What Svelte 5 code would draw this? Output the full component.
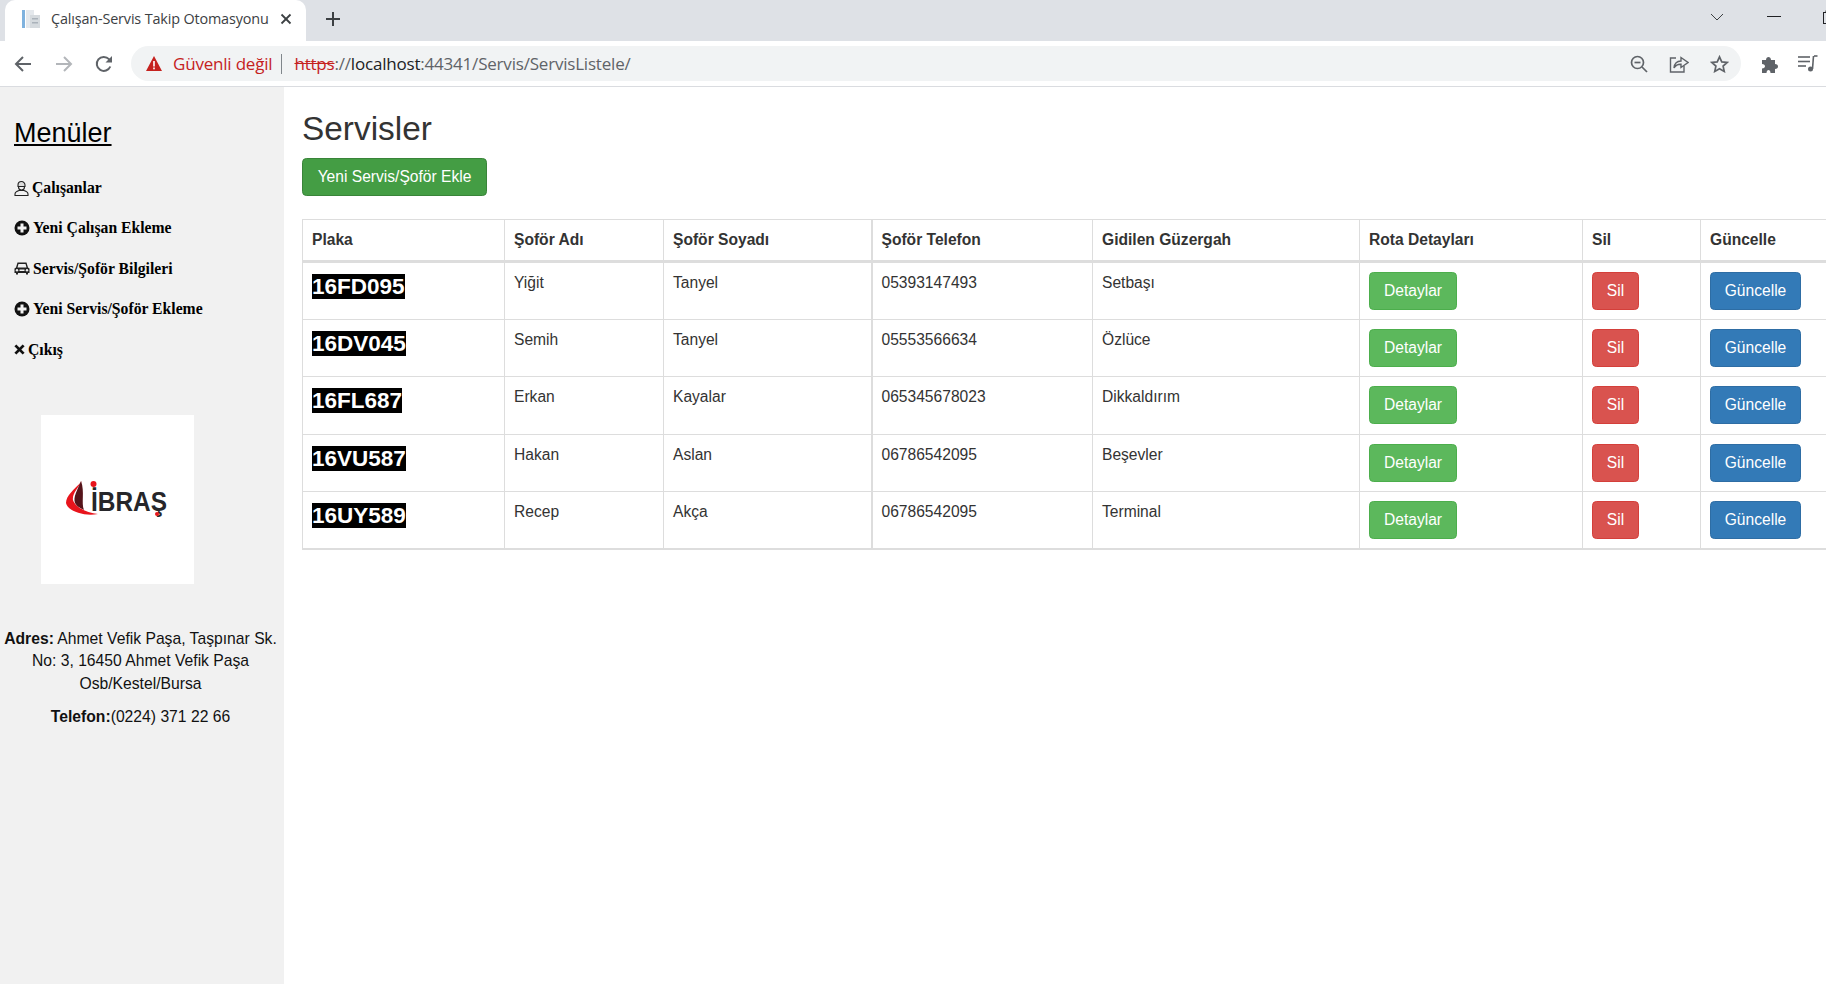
<script>
	const rows = [
		{ plaka: '16FD095', ad: 'Yiğit', soyad: 'Tanyel', tel: '05393147493', yol: 'Setbaşı' },
		{ plaka: '16DV045', ad: 'Semih', soyad: 'Tanyel', tel: '05553566634', yol: 'Özlüce' },
		{ plaka: '16FL687', ad: 'Erkan', soyad: 'Kayalar', tel: '065345678023', yol: 'Dikkaldırım' },
		{ plaka: '16VU587', ad: 'Hakan', soyad: 'Aslan', tel: '06786542095', yol: 'Beşevler' },
		{ plaka: '16UY589', ad: 'Recep', soyad: 'Akça', tel: '06786542095', yol: 'Terminal' }
	];
	const heads = ['Plaka', 'Şoför Adı', 'Şoför Soyadı', 'Şoför Telefon', 'Gidilen Güzergah', 'Rota Detayları', 'Sil', 'Güncelle'];
	const menu = [
		{ icon: 'user', label: 'Çalışanlar' },
		{ icon: 'plus', label: 'Yeni Çalışan Ekleme' },
		{ icon: 'car', label: 'Servis/Şoför Bilgileri' },
		{ icon: 'plus', label: 'Yeni Servis/Şoför Ekleme' },
		{ icon: 'x', label: 'Çıkış' }
	];
</script>

<div class="browser">
	<div class="tabstrip">
		<div class="tab">
			<svg class="favicon" viewBox="0 0 20 20" width="20" height="20">
				<rect x="1" y="1" width="3" height="18" fill="#7fb2de" />
				<rect x="5" y="1" width="8" height="18" fill="#e4e8ec" />
				<rect x="9" y="6" width="10" height="13" fill="#d5dade" />
				<rect x="11" y="9" width="6" height="1.5" fill="#aab2ba" />
				<rect x="11" y="13" width="6" height="1.5" fill="#aab2ba" />
			</svg>
			<span class="tab-title">Çalışan-Servis Takip Otomasyonu</span>
			<svg class="tab-close" viewBox="0 0 12 12" width="12" height="12" fill="none" stroke="#3c4043" stroke-width="1.8"><line x1="1.5" y1="1.5" x2="10.5" y2="10.5" /><line x1="10.5" y1="1.5" x2="1.5" y2="10.5" /></svg>
		</div>
		<svg class="new-tab" viewBox="0 0 16 16" width="16" height="16" fill="none" stroke="#3c4043" stroke-width="2"><line x1="8" y1="1" x2="8" y2="15" /><line x1="1" y1="8" x2="15" y2="8" /></svg>
		<div class="win-controls">
			<svg viewBox="0 0 14 8" width="14" height="8" fill="none" stroke="#3c4043" stroke-width="1"><polyline points="1,1 7,7 13,1" /></svg>
			<svg class="win-min" viewBox="0 0 14 2" width="14" height="2"><rect width="14" height="1" fill="#202124" /></svg>
			<svg class="win-max" viewBox="0 0 14 14" width="14" height="14" fill="none" stroke="#202124" stroke-width="1"><rect x="0.5" y="2.5" width="12" height="11" /><polyline points="3,2 3,0.5 13.5,0.5" /></svg>
		</div>
	</div>
	<div class="toolbar">
		<svg class="nav" viewBox="0 0 18 18" width="18" height="18" fill="none" stroke="#5f6368" stroke-width="2"><line x1="17" y1="9" x2="2" y2="9" /><polyline points="9,2 2,9 9,16" /></svg>
		<svg class="nav" viewBox="0 0 18 18" width="18" height="18" fill="none" stroke="#b3b6ba" stroke-width="2"><line x1="1" y1="9" x2="16" y2="9" /><polyline points="9,2 16,9 9,16" /></svg>
		<svg class="nav" viewBox="0 0 18 18" width="18" height="18" fill="none" stroke="#5f6368" stroke-width="2"><path d="M15.3 11.5A7 7 0 1 1 14 4.2L16 6" /><polygon points="17,1 17,7.5 10.5,7.5" fill="#5f6368" stroke="none" /></svg>
		<div class="omnibox">
			<svg class="warn" viewBox="0 0 16 15" width="16" height="15"><polygon points="8,0 16,15 0,15" fill="#c5221f" /><rect x="7.2" y="5" width="1.6" height="5.5" fill="#fff" /><rect x="7.2" y="11.5" width="1.6" height="1.8" fill="#fff" /></svg>
			<span class="insecure">Güvenli değil</span>
			<span class="sep"></span>
			<span class="url"><s class="https">https</s>://<span class="host">localhost</span>:44341/Servis/ServisListele/</span>
			<div class="omni-icons">
				<svg viewBox="0 0 18 18" width="18" height="18" fill="none" stroke="#5f6368" stroke-width="1.7"><circle cx="7.5" cy="7.5" r="6" /><line x1="12" y1="12" x2="17" y2="17" /><line x1="4.5" y1="7.5" x2="10.5" y2="7.5" /></svg>
				<svg viewBox="0 0 20 18" width="20" height="18" fill="none" stroke="#5f6368" stroke-width="1.4"><path d="M7 3H1.5V17H15V11" /><path d="M5 13C5.5 8.5 8.5 6 12 6V2.5L19 7.5L12 12.5V9.2C9 9 6.5 10.5 5 13Z" /></svg>
				<svg viewBox="0 0 20 19" width="19" height="18" fill="none" stroke="#5f6368" stroke-width="1.8"><polygon points="10,2 12.4,7.3 18,7.9 13.8,11.7 15,17.3 10,14.4 5,17.3 6.2,11.7 2,7.9 7.6,7.3" /></svg>
			</div>
		</div>
		<svg class="ext" viewBox="0 0 18 18" width="18" height="18"><path fill="#5f6368" d="M1 5H5C5 1 10 1 10 5H14V9C18 9 18 14 14 14V18H9.500C9.500 14 5.500 14 5.500 18H1V13.500C5 13.500 5 9 1 9Z" /></svg>
		<svg class="media" viewBox="0 0 20 17" width="20" height="17" fill="none" stroke="#5f6368" stroke-width="1.6"><line x1="0" y1="2" x2="12" y2="2" /><line x1="0" y1="6.500" x2="12" y2="6.500" /><line x1="0" y1="11" x2="8" y2="11" /><line x1="16" y1="1" x2="19.500" y2="1" /><line x1="15.500" y1="1" x2="14.500" y2="14" /><circle cx="12.500" cy="14" r="2.500" fill="#5f6368" stroke="none" /></svg>
	</div>
	<div class="page">
		<aside class="sidebar">
			<h2 class="side-title">Menüler</h2>
			<ul class="menu">
				{#each menu as item}
					<li>
						{#if item.icon === 'user'}
							<svg viewBox="0 0 15 16" width="15" height="16" fill="none" stroke="#222" stroke-width="1.100"><path d="M4 6.500V5A3.500 3.500 0 0 1 11 5V6.500H4Z" fill="#ddd" /><path d="M4.500 7A3 3 0 0 0 10.500 7" /><path d="M1 15.500V14C1 12 3.500 11 5 10.500H10C11.500 11 14 12 14 14V15.500Z" /></svg>
						{:else if item.icon === 'plus'}
							<svg viewBox="0 0 16 16" width="16" height="16"><circle cx="8" cy="8" r="7.500" fill="#111" /><rect x="6.500" y="3.500" width="3" height="9" fill="#f1f1f1" /><rect x="3.500" y="6.500" width="9" height="3" fill="#f1f1f1" /></svg>
						{:else if item.icon === 'car'}
							<svg viewBox="0 0 16 13" width="16" height="13"><path fill="#222" d="M3.500 0.500H12.500L14 5.500L15.500 6.500V11H14V12.500H12V11H4V12.500H2V11H0.500V6.500L2 5.500Z" /><path fill="#f1f1f1" d="M4.500 2H11.500L12.500 5.500H3.500Z" /><circle cx="3" cy="8.300" r="1.200" fill="#f1f1f1" /><circle cx="13" cy="8.300" r="1.200" fill="#f1f1f1" /><rect x="5.500" y="7.500" width="5" height="1.500" fill="#f1f1f1" /></svg>
						{:else}
							<svg viewBox="0 0 12 12" width="11" height="11" fill="none" stroke="#111" stroke-width="3"><line x1="1.500" y1="1.500" x2="10.500" y2="10.500" /><line x1="10.500" y1="1.500" x2="1.500" y2="10.500" /></svg>
						{/if}
						<span>{item.label}</span>
					</li>
				{/each}
			</ul>
			<div class="logo">
				<svg viewBox="0 0 153 169" width="153" height="169">
					<path d="M41 66C33 75 25 80 25 88C26 95 42 102 57 99C46 98 34 92 32 85C31 79 37 73 41 66Z" fill="#e8141c" />
					<path d="M40 66C36 76 32 82 34 88C36 92 40 93 43 95C40 88 44 77 40 66Z" fill="#55141a" />
					<text x="50" y="96" class="logo-text" textLength="76" lengthAdjust="spacingAndGlyphs">İBRAŞ</text>
					<circle cx="52.500" cy="69" r="3" fill="#e8141c" />
					<circle cx="116" cy="99" r="2" fill="#e8141c" />
				</svg>
			</div>
			<p class="address"><b>Adres:</b> Ahmet Vefik Paşa, Taşpınar Sk. No: 3, 16450 Ahmet Vefik Paşa Osb/Kestel/Bursa</p>
			<p class="phone"><b>Telefon:</b>(0224) 371 22 66</p>
		</aside>
		<main class="content">
			<h2 class="title">Servisler</h2>
			<button class="btn add">Yeni Servis/Şoför Ekle</button>
			<table>
				<colgroup>
					<col style="width:202px" /><col style="width:159px" /><col style="width:208px" /><col style="width:221px" /><col style="width:267px" /><col style="width:223px" /><col style="width:118px" /><col style="width:140px" />
				</colgroup>
				<thead>
					<tr>
						{#each heads as head}
							<th>{head}</th>
						{/each}
					</tr>
				</thead>
				<tbody>
					{#each rows as row}
						<tr>
							<td><mark>{row.plaka}</mark></td>
							<td>{row.ad}</td>
							<td>{row.soyad}</td>
							<td class="tel">{row.tel}</td>
							<td>{row.yol}</td>
							<td><button class="btn success">Detaylar</button></td>
							<td><button class="btn danger">Sil</button></td>
							<td><button class="btn primary">Güncelle</button></td>
						</tr>
					{/each}
				</tbody>
			</table>
		</main>
	</div>
</div>

<style>
	:global(body) {
		margin: 0;
		overflow: hidden;
		background: #fff;
	}

	.browser {
		display: flex;
		flex-direction: column;
		width: 1826px;
		height: 984px;
		overflow: hidden;
		font-family: "Liberation Sans", Arial, sans-serif;
	}

	.tabstrip {
		display: flex;
		align-items: flex-end;
		height: 41px;
		background: #dee1e6;
		flex: none;
		padding-left: 5px;
	}

	.tab {
		display: flex;
		align-items: center;
		box-sizing: border-box;
		width: 301px;
		height: 41px;
		padding: 0 14px 4px 16px;
		background: #fff;
		border-radius: 10px 10px 0 0;
	}

	.favicon {
		margin-right: 10px;
		flex: none;
	}

	.tab-title {
		flex: 1;
		font-family: "Open Sans", sans-serif;
		font-size: 14.400px;
		letter-spacing: -0.15px;
		color: #3c4043;
		white-space: nowrap;
	}

	.new-tab {
		margin: 0 0 14px 19px;
	}

	.win-controls {
		display: flex;
		align-items: center;
		margin-left: auto;
		height: 38px;
		margin-bottom: 5px;
	}

	.win-min {
		margin-left: 43px;
	}

	.win-max {
		margin-left: 42px;
		margin-right: -11px;
	}

	.toolbar {
		display: flex;
		align-items: center;
		flex: none;
		box-sizing: border-box;
		height: 46px;
		padding: 0 8px 0 14px;
		background: #fff;
		border-bottom: 1px solid #dadce0;
	}

	.nav {
		margin-right: 23px;
		flex: none;
	}

	.nav:nth-child(3) {
		margin-right: 18px;
		margin-left: -1px;
	}

	.omnibox {
		display: flex;
		align-items: center;
		box-sizing: border-box;
		width: 1612px;
		height: 35px;
		padding: 0 12px 0 15px;
		background: #f1f3f4;
		border-radius: 18px;
		font-family: "Open Sans", sans-serif;
		font-size: 17px;
		letter-spacing: -0.2px;
		color: #5f6368;
	}

	.insecure {
		margin-left: 11px;
		color: #c5221f;
	}

	.sep {
		width: 1px;
		height: 20px;
		margin: 0 12px 0 9px;
		background: #80868b;
	}

	.https {
		color: #c5221f;
	}

	.host {
		color: #202124;
	}

	.omni-icons {
		display: flex;
		align-items: center;
		gap: 21px;
		margin-left: auto;
	}

	.ext {
		margin-left: 20px;
		flex: none;
	}

	.media {
		margin-left: 19px;
		flex: none;
	}

	.page {
		display: flex;
		flex: 1;
		min-height: 0;
	}

	.sidebar {
		flex: none;
		width: 284px;
		background: #f1f1f1;
		color: #000;
	}

	.side-title {
		margin: 31px 0 0 14px;
		font-size: 27px;
		line-height: 31px;
		font-weight: 400;
		text-decoration: underline;
	}

	.menu {
		list-style: none;
		margin: 18.500px 0 0 14px;
		padding: 0;
	}

	.menu li {
		display: flex;
		align-items: center;
		gap: 3px;
		height: 40.500px;
		font-family: "Liberation Serif", serif;
		font-size: 15.700px;
		font-weight: 700;
	}

	.menu svg {
		flex: none;
	}

	.logo {
		width: 153px;
		height: 169px;
		margin: 44.500px 0 0 41px;
		background: #fff;
	}

	.logo svg {
		display: block;
	}

	.logo-text {
		font-family: "Liberation Sans", sans-serif;
		font-size: 27px;
		font-weight: 700;
		fill: #26262a;
	}

	.address,
	.phone {
		margin: 0;
		padding-right: 3px;
		font-size: 15.700px;
		line-height: 22.500px;
		text-align: center;
		color: #111;
	}

	.address {
		margin-top: 44px;
	}

	.phone {
		margin-top: 11px;
	}

	.content {
		flex: 1;
		min-width: 0;
		padding-left: 18px;
		color: #333;
	}

	.title {
		margin: 22px 0 0;
		font-size: 33.400px;
		line-height: 40px;
		font-weight: 400;
	}

	.btn {
		box-sizing: border-box;
		display: inline-block;
		height: 38px;
		padding: 0;
		border: 1px solid transparent;
		border-radius: 4.400px;
		font-family: inherit;
		font-size: 15.600px;
		color: #fff;
	}

	.add {
		display: block;
		width: 185px;
		margin-top: 9px;
		background: #449d44;
		border-color: #398439;
	}

	.success {
		width: 88px;
		background: #5cb85c;
		border-color: #4cae4c;
	}

	.danger {
		width: 47px;
		background: #d9534f;
		border-color: #d43f3a;
	}

	.primary {
		width: 91px;
		background: #337ab7;
		border-color: #2e6da4;
	}

	table {
		table-layout: fixed;
		width: 1538px;
		margin-top: 23px;
		border-collapse: collapse;
		font-size: 15.600px;
		border: 1px solid #ddd;
		border-bottom-width: 2px;
	}

	th,
	td {
		box-sizing: border-box;
		padding: 9px;
		border: 1px solid #ddd;
		text-align: left;
		vertical-align: top;
		line-height: 22px;
	}

	th {
		height: 41px;
		font-weight: 700;
		border-bottom: 3px solid #ddd;
	}

	th:nth-child(4),
	.tel {
		border-left-width: 2px;
	}

	td {
		height: 57.300px;
	}

	td:first-child {
		padding-top: 11px;
	}

	mark {
		padding: 0;
		background: #000;
		color: #fff;
		font-size: 22.500px;
		font-weight: 700;
		line-height: 26px;
	}
</style>
